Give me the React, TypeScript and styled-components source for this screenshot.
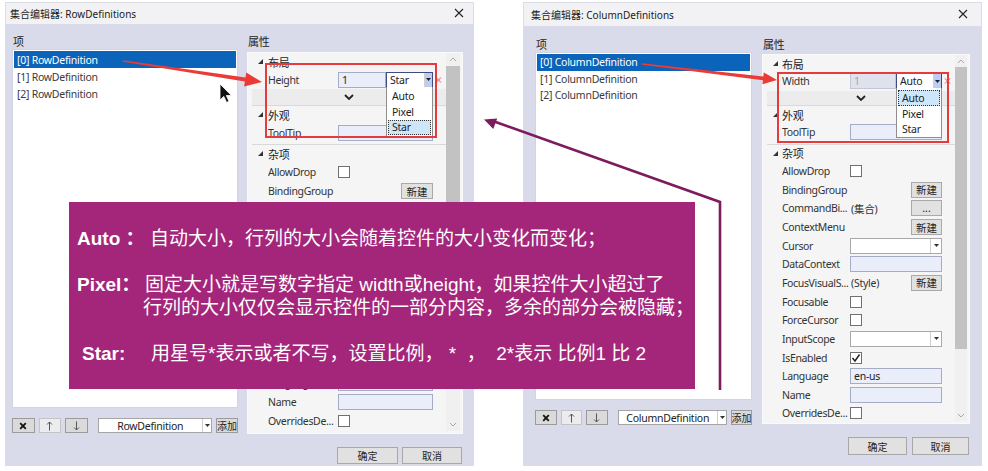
import React from 'react';
import styled, { createGlobalStyle } from 'styled-components';

const GlobalStyle = createGlobalStyle`
  html, body {
    margin: 0;
    padding: 0;
    background: #fff;
  }
  body {
    font-family: "Noto Sans", "Noto Sans CJK SC", sans-serif;
  }
  * {
    box-sizing: border-box;
  }
`;

type GridMetrics = {
  triX: number;
  labelX: number;
  valueX: number;
  valueW: number;
  numW: number;
  rowH: number;
  expandH: number;
  scrollW: number;
  arrowH: number;
  thumbH: number;
  btnW: number;
};

type EditorMetrics = {
  title: string;
  item: string;
  sizeLabel: string;
  selected: string;
  numDisabled: boolean;
  width: number;
  height: number;
  titleH: number;
  titleX: number;
  closeR: number;
  padT: number;
  padL: number;
  padR: number;
  listW: number;
  colGap: number;
  capH: number;
  listH: number;
  itemH: number;
  tbBtnW: number;
  addW: number;
  panelTop: number;
  panelH: number;
  footGap: number;
  footH: number;
  okW: number;
  cancelW: number;
  footBtnGap: number;
  grid: GridMetrics;
};

const rowEditor: EditorMetrics = {
  title: '集合编辑器: RowDefinitions',
  item: 'RowDefinition',
  sizeLabel: 'Height',
  selected: 'Star',
  numDisabled: false,
  width: 467,
  height: 462,
  titleH: 21,
  titleX: 4,
  closeR: 9,
  padT: 9,
  padL: 6,
  padR: 10,
  listW: 226,
  colGap: 9,
  capH: 16,
  listH: 359,
  itemH: 17,
  tbBtnW: 22.5,
  addW: 22,
  panelTop: 3,
  panelH: 382,
  footGap: 13,
  footH: 17,
  okW: 61,
  cancelW: 60,
  footBtnGap: 4,
  grid: {
    triX: 10,
    labelX: 20,
    valueX: 90,
    valueW: 95,
    numW: 48,
    rowH: 19.2,
    expandH: 16,
    scrollW: 14,
    arrowH: 13,
    thumbH: 292,
    btnW: 32,
  },
};

const columnEditor: EditorMetrics = {
  title: '集合编辑器: ColumnDefinitions',
  item: 'ColumnDefinition',
  sizeLabel: 'Width',
  selected: 'Auto',
  numDisabled: true,
  width: 457,
  height: 462,
  titleH: 23,
  titleX: 7,
  closeR: 13,
  padT: 9,
  padL: 11,
  padR: 11,
  listW: 217,
  colGap: 10,
  capH: 17,
  listH: 348,
  itemH: 16.5,
  tbBtnW: 21.5,
  addW: 21,
  panelTop: 2,
  panelH: 370,
  footGap: 12,
  footH: 18,
  okW: 59,
  cancelW: 57,
  footBtnGap: 5,
  grid: {
    triX: 10,
    labelX: 19,
    valueX: 87,
    valueW: 92,
    numW: 46,
    rowH: 18.65,
    expandH: 14.5,
    scrollW: 12,
    arrowH: 12,
    thumbH: 282,
    btnW: 31,
  },
};

type Prop =
  | { kind: 'check'; name: string; checked?: boolean }
  | { kind: 'button'; name: string; text?: string; btn: string }
  | { kind: 'input'; name: string; value?: string }
  | { kind: 'combo'; name: string };

const miscProps: Prop[] = [
  { kind: 'check', name: 'AllowDrop' },
  { kind: 'button', name: 'BindingGroup', btn: '新建' },
  { kind: 'button', name: 'CommandBi...', text: '(集合)', btn: '...' },
  { kind: 'button', name: 'ContextMenu', btn: '新建' },
  { kind: 'combo', name: 'Cursor' },
  { kind: 'input', name: 'DataContext' },
  { kind: 'button', name: 'FocusVisualS...', text: '(Style)', btn: '新建' },
  { kind: 'check', name: 'Focusable' },
  { kind: 'check', name: 'ForceCursor' },
  { kind: 'combo', name: 'InputScope' },
  { kind: 'check', name: 'IsEnabled', checked: true },
  { kind: 'input', name: 'Language', value: 'en-us' },
  { kind: 'input', name: 'Name' },
  { kind: 'check', name: 'OverridesDe...' },
];

const Page = styled.div`
  position: relative;
  width: 988px;
  height: 471px;
  overflow: hidden;
  background: #fff;
  display: flex;
  align-items: flex-start;
  gap: 51px;
  padding: 3px 0 0 6px;
`;

const Window = styled.div<{ $w: number; $h: number }>`
  width: ${(p) => p.$w}px;
  height: ${(p) => p.$h}px;
  flex: none;
  display: flex;
  flex-direction: column;
  background: #d9dbea;
  box-shadow: 0 0 0 1px #dcdce4;
  font-size: 10.5px;
  letter-spacing: -0.25px;
  color: #333;
  white-space: nowrap;
`;

const TitleBar = styled.div<{ $h: number; $x: number; $r: number }>`
  height: ${(p) => p.$h}px;
  flex: none;
  display: flex;
  align-items: center;
  justify-content: space-between;
  padding: 0 ${(p) => p.$r}px 1px ${(p) => p.$x}px;
  background: #f2f2f4;
  font-size: 10px;
  letter-spacing: 0;
  color: #1b1b1b;
`;

const Body = styled.div<{ $cols: string; $gap: number; $pad: string }>`
  display: grid;
  grid-template-columns: ${(p) => p.$cols};
  column-gap: ${(p) => p.$gap}px;
  align-items: start;
  padding: ${(p) => p.$pad};
`;

const Column = styled.div`
  display: flex;
  flex-direction: column;
`;

const Caption = styled.div<{ $h: number }>`
  height: ${(p) => p.$h}px;
  display: flex;
  align-items: center;
  padding-left: 1px;
  font-size: 11px;
  color: #222;
`;

const ItemList = styled.div<{ $h: number }>`
  height: ${(p) => p.$h}px;
  padding: 1px;
  background: #fff;
  border: 1px solid #d2d4e2;
`;

const Item = styled.div<{ $h: number; $selected?: boolean }>`
  height: ${(p) => p.$h}px;
  display: flex;
  align-items: center;
  padding-left: 3px;
  font-size: 10.5px;
  color: ${(p) => (p.$selected ? '#fff' : '#3a3a3a')};
  background: ${(p) => (p.$selected ? '#0b63ba' : 'transparent')};
`;

const Toolbar = styled.div`
  height: 15px;
  margin-top: 10px;
  display: flex;
  gap: 4px;
`;

const ToolButton = styled.div<{ $w: number; $light?: boolean }>`
  width: ${(p) => p.$w}px;
  flex: none;
  display: flex;
  align-items: center;
  justify-content: center;
  overflow: hidden;
  background: ${(p) => (p.$light ? '#ececee' : '#dadada')};
  border: 1px solid ${(p) => (p.$light ? '#c4c4c8' : '#9b9b9b')};
  font-size: 10px;
  letter-spacing: 0;
  color: #222;
`;

const TypeCombo = styled.div`
  flex: 1;
  margin-left: 6px;
  display: flex;
  background: #fff;
  border: 1px solid #a6a6a6;
`;

const TypeComboText = styled.div`
  flex: 1;
  display: flex;
  align-items: center;
  justify-content: center;
  font-size: 10.5px;
  color: #222;
`;

const ComboArrow = styled.div<{ $w: number; $bg?: string }>`
  width: ${(p) => p.$w}px;
  flex: none;
  display: flex;
  align-items: center;
  justify-content: center;
  border-left: 1px solid #cfcfcf;
  background: ${(p) => p.$bg ?? 'transparent'};
`;

const Panel = styled.div<{ $h: number; $mt: number }>`
  height: ${(p) => p.$h}px;
  margin-top: ${(p) => p.$mt}px;
  display: flex;
  background: #f5f5f5;
  border: 1px solid #fafafa;
`;

const PanelBody = styled.div`
  flex: 1;
  min-width: 0;
  display: flex;
  flex-direction: column;
  overflow: hidden;
`;

const GroupHeader = styled.div<{ $x: number; $gap: number }>`
  height: 17px;
  flex: none;
  display: flex;
  align-items: center;
  gap: ${(p) => p.$gap}px;
  padding-left: ${(p) => p.$x}px;
  font-size: 11px;
  color: #222;
`;

const Divider = styled.div<{ $mt?: number }>`
  height: 1px;
  flex: none;
  margin: ${(p) => p.$mt ?? 0}px 0 0 4px;
  background: #d9d9d9;
`;

const PropRow = styled.div<{ $h: number; $x: number }>`
  height: ${(p) => p.$h}px;
  flex: none;
  display: flex;
  align-items: center;
  padding-left: ${(p) => p.$x}px;
`;

const PropLabel = styled.div<{ $w: number }>`
  width: ${(p) => p.$w}px;
  flex: none;
  overflow: hidden;
  font-size: 10.5px;
  letter-spacing: -0.35px;
  color: #333;
`;

const PropValue = styled.div<{ $w: number }>`
  width: ${(p) => p.$w}px;
  flex: none;
  display: flex;
  align-items: center;
  position: relative;
`;

const ExpandRow = styled.div<{ $h: number; $x: number }>`
  height: ${(p) => p.$h}px;
  flex: none;
  display: flex;
  align-items: center;
  margin-left: 4px;
  padding-left: ${(p) => p.$x}px;
  background: #ececec;
`;

const TextBox = styled.div<{ $w?: number; $disabled?: boolean }>`
  width: ${(p) => (p.$w ? `${p.$w}px` : '100%')};
  height: 16px;
  flex: none;
  display: flex;
  align-items: center;
  padding-left: 3px;
  background: ${(p) => (p.$disabled ? '#dfe2ec' : '#eaeefa')};
  border: 1px solid ${(p) => (p.$disabled ? '#c2c7d6' : '#a5acc6')};
  font-size: 10.5px;
  color: ${(p) => (p.$disabled ? '#a6a6a6' : '#222')};
`;

const UnitCombo = styled.div`
  flex: 1;
  height: 16px;
  display: flex;
  position: relative;
  background: #fff;
  border: 1px solid #3f4b7e;
`;

const UnitText = styled.div`
  flex: 1;
  display: flex;
  align-items: center;
  padding-left: 3px;
  font-size: 10.5px;
  color: #222;
`;

const DropList = styled.div`
  position: absolute;
  top: 100%;
  left: -1px;
  right: -1px;
  height: 50px;
  padding: 2px 1px 0;
  background: #fff;
  border: 1px solid #8d8d8d;
  border-top: none;
  z-index: 2;
`;

const DropItem = styled.div<{ $selected?: boolean }>`
  height: 15.5px;
  display: flex;
  align-items: center;
  padding-left: 4px;
  font-size: 10.5px;
  color: #222;
  background: ${(p) => (p.$selected ? '#cde6fa' : 'transparent')};
  outline: ${(p) => (p.$selected ? '1px dotted #333' : 'none')};
  outline-offset: -1px;
`;

const ClearMark = styled.div`
  position: absolute;
  left: calc(100% + 2px);
  top: 50%;
  transform: translateY(-50%);
  display: flex;
`;

const CheckBox = styled.div`
  width: 12px;
  height: 12px;
  flex: none;
  display: flex;
  align-items: center;
  justify-content: center;
  background: #fff;
  border: 1px solid #707070;
`;

const SmallButton = styled.div<{ $w: number }>`
  width: ${(p) => p.$w}px;
  height: 16px;
  margin-left: auto;
  flex: none;
  display: flex;
  align-items: center;
  justify-content: center;
  background: #e1e1e1;
  border: 1px solid #a9a9a9;
  font-size: 10.5px;
  letter-spacing: 0;
  color: #222;
`;

const ValueNote = styled.span`
  padding-left: 1px;
  font-size: 10.5px;
  color: #333;
`;

const ValueCombo = styled.div`
  width: 100%;
  height: 16px;
  display: flex;
  background: #fff;
  border: 1px solid #a9a9a9;
`;

const Scrollbar = styled.div<{ $w: number }>`
  width: ${(p) => p.$w}px;
  flex: none;
  margin: 0 2px 2px 0;
  display: flex;
  flex-direction: column;
  background: #f0f0f0;
`;

const ScrollArrow = styled.div<{ $h: number }>`
  height: ${(p) => p.$h}px;
  flex: none;
  display: flex;
  align-items: center;
  justify-content: center;
`;

const ScrollThumb = styled.div<{ $h: number }>`
  height: ${(p) => p.$h}px;
  flex: none;
  background: #c2c2c2;
`;

const ScrollSpace = styled.div`
  flex: 1;
`;

const Footer = styled.div<{ $mt: number; $pr: number; $gap: number }>`
  display: flex;
  justify-content: flex-end;
  gap: ${(p) => p.$gap}px;
  margin-top: ${(p) => p.$mt}px;
  padding-right: ${(p) => p.$pr}px;
`;

const DialogButton = styled.div<{ $w: number; $h: number }>`
  width: ${(p) => p.$w}px;
  height: ${(p) => p.$h}px;
  display: flex;
  align-items: center;
  justify-content: center;
  background: #e1e1e1;
  border: 1px solid #a8a8a8;
  font-size: 10px;
  letter-spacing: 0;
  color: #1e1e1e;
`;

/* annotations laid over the screenshot */

const Overlay = styled.svg`
  position: absolute;
  left: 0;
  top: 0;
  pointer-events: none;
  z-index: 5;
`;

const RedFrame = styled.div<{ $x: number; $y: number; $w: number; $h: number }>`
  position: absolute;
  left: ${(p) => p.$x}px;
  top: ${(p) => p.$y}px;
  width: ${(p) => p.$w}px;
  height: ${(p) => p.$h}px;
  border: 2px solid #e63b3d;
  z-index: 4;
`;

const Note = styled.div`
  position: absolute;
  left: 69px;
  top: 202px;
  width: 626px;
  height: 187px;
  padding: 25px 0 0 8px;
  background: #a4267a;
  color: #fff;
  font-family: "Liberation Sans", "Noto Sans CJK SC", sans-serif;
  font-size: 19px;
  line-height: 23px;
  z-index: 4;
`;

const NoteRow = styled.div`
  display: flex;
  white-space: pre;

  & + & {
    margin-top: 23px;
  }
`;

const NoteKey = styled.span<{ $w: number; $indent?: number }>`
  width: ${(p) => p.$w}px;
  margin-left: ${(p) => p.$indent ?? 0}px;
  flex: none;
  font-weight: bold;
`;

const NoteLines = styled.div`
  flex: none;
  display: flex;
  flex-direction: column;
`;

const NoteWrap = styled.span`
  margin-left: -2px;
`;

const Triangle = () => (
  <svg width="5" height="5" viewBox="0 0 5 5">
    <polygon points="5,0 5,5 0,5" fill="#333" />
  </svg>
);

const DownTick = ({ color = '#333' }: { color?: string }) => (
  <svg width="5" height="3" viewBox="0 0 5 3">
    <polygon points="0,0 5,0 2.5,3" fill={color} />
  </svg>
);

const CloseIcon = () => (
  <svg width="10" height="10" viewBox="0 0 10 10">
    <path d="M1 1 L9 9 M9 1 L1 9" stroke="#222" strokeWidth="1.1" />
  </svg>
);

const ClearIcon = () => (
  <svg width="7" height="7" viewBox="0 0 7 7">
    <path d="M1 1 L6 6 M6 1 L1 6" stroke="#e8504e" strokeWidth="1" />
  </svg>
);

const Chevron = () => (
  <svg width="10" height="6" viewBox="0 0 10 6">
    <polyline points="1,1 5,5 9,1" fill="none" stroke="#222" strokeWidth="1.8" />
  </svg>
);

const Tick = () => (
  <svg width="10" height="10" viewBox="0 0 10 10">
    <polyline points="1.5,5 4,8 8.5,1.5" fill="none" stroke="#222" strokeWidth="1.5" />
  </svg>
);

const ScrollCaret = ({ up }: { up?: boolean }) => (
  <svg width="8" height="5" viewBox="0 0 8 5">
    <polyline
      points={up ? '1,4 4,1 7,4' : '1,1 4,4 7,1'}
      fill="none"
      stroke="#a8a8a8"
      strokeWidth="1"
    />
  </svg>
);

const DeleteIcon = () => (
  <svg width="8" height="8" viewBox="0 0 8 8">
    <path d="M1.2 1.2 L6.8 6.8 M6.8 1.2 L1.2 6.8" stroke="#111" strokeWidth="1.8" />
  </svg>
);

const ArrowIcon = ({ up }: { up?: boolean }) => (
  <svg width="7" height="10" viewBox="0 0 7 10">
    <path
      d={up ? 'M3.5 1 V9.5 M1 3.5 L3.5 1 L6 3.5' : 'M3.5 0.5 V9 M1 6.5 L3.5 9 L6 6.5'}
      fill="none"
      stroke="#555"
      strokeWidth="1"
    />
  </svg>
);

const PropEditor: React.FC<{ p: Prop; g: GridMetrics }> = ({ p, g }) => {
  switch (p.kind) {
    case 'check':
      return <CheckBox>{p.checked && <Tick />}</CheckBox>;
    case 'button':
      return (
        <>
          {p.text && <ValueNote>{p.text}</ValueNote>}
          <SmallButton $w={g.btnW}>{p.btn}</SmallButton>
        </>
      );
    case 'input':
      return <TextBox>{p.value}</TextBox>;
    case 'combo':
      return (
        <ValueCombo>
          <ScrollSpace />
          <ComboArrow $w={11}>
            <DownTick />
          </ComboArrow>
        </ValueCombo>
      );
  }
};

const PropertyGrid: React.FC<{ m: EditorMetrics }> = ({ m }) => {
  const g = m.grid;
  const labelW = g.valueX - g.labelX;
  const headerGap = g.labelX - g.triX - 5;
  return (
    <Panel $h={m.panelH} $mt={m.panelTop}>
      <PanelBody>
        <GroupHeader $x={g.triX} $gap={headerGap}>
          <Triangle />
          布局
        </GroupHeader>
        <PropRow $h={g.rowH} $x={g.labelX}>
          <PropLabel $w={labelW}>{m.sizeLabel}</PropLabel>
          <PropValue $w={g.valueW}>
            <TextBox $w={g.numW} $disabled={m.numDisabled}>
              1
            </TextBox>
            <UnitCombo>
              <UnitText>{m.selected}</UnitText>
              <ComboArrow $w={8} $bg="#bccdf3">
                <DownTick color="#222" />
              </ComboArrow>
              <DropList>
                {['Auto', 'Pixel', 'Star'].map((opt) => (
                  <DropItem key={opt} $selected={opt === m.selected}>
                    {opt}
                  </DropItem>
                ))}
              </DropList>
            </UnitCombo>
            <ClearMark>
              <ClearIcon />
            </ClearMark>
          </PropValue>
        </PropRow>
        <ExpandRow $h={g.expandH} $x={g.valueX + 2}>
          <Chevron />
        </ExpandRow>
        <Divider />
        <GroupHeader $x={g.triX} $gap={headerGap}>
          <Triangle />
          外观
        </GroupHeader>
        <PropRow $h={g.rowH} $x={g.labelX}>
          <PropLabel $w={labelW}>ToolTip</PropLabel>
          <PropValue $w={g.valueW}>
            <TextBox />
          </PropValue>
        </PropRow>
        <Divider $mt={2} />
        <GroupHeader $x={g.triX} $gap={headerGap}>
          <Triangle />
          杂项
        </GroupHeader>
        {miscProps.map((p) => (
          <PropRow key={p.name} $h={g.rowH} $x={g.labelX}>
            <PropLabel $w={labelW}>{p.name}</PropLabel>
            <PropValue $w={g.valueW}>
              <PropEditor p={p} g={g} />
            </PropValue>
          </PropRow>
        ))}
      </PanelBody>
      <Scrollbar $w={g.scrollW}>
        <ScrollArrow $h={g.arrowH}>
          <ScrollCaret up />
        </ScrollArrow>
        <ScrollThumb $h={g.thumbH} />
        <ScrollSpace />
        <ScrollArrow $h={g.arrowH}>
          <ScrollCaret />
        </ScrollArrow>
      </Scrollbar>
    </Panel>
  );
};

const CollectionEditor: React.FC<{ m: EditorMetrics }> = ({ m }) => {
  const propW = m.width - m.padL - m.padR - m.listW - m.colGap;
  return (
    <Window $w={m.width} $h={m.height}>
      <TitleBar $h={m.titleH} $x={m.titleX} $r={m.closeR}>
        <span>{m.title}</span>
        <CloseIcon />
      </TitleBar>
      <Body
        $cols={`${m.listW}px ${propW}px`}
        $gap={m.colGap}
        $pad={`${m.padT}px ${m.padR}px 0 ${m.padL}px`}
      >
        <Column>
          <Caption $h={m.capH}>项</Caption>
          <ItemList $h={m.listH}>
            {[0, 1, 2].map((i) => (
              <Item key={i} $h={m.itemH} $selected={i === 0}>
                [{i}] {m.item}
              </Item>
            ))}
          </ItemList>
          <Toolbar>
            <ToolButton $w={m.tbBtnW}>
              <DeleteIcon />
            </ToolButton>
            <ToolButton $w={m.tbBtnW} $light>
              <ArrowIcon up />
            </ToolButton>
            <ToolButton $w={m.tbBtnW}>
              <ArrowIcon />
            </ToolButton>
            <TypeCombo>
              <TypeComboText>{m.item}</TypeComboText>
              <ComboArrow $w={9}>
                <DownTick />
              </ComboArrow>
            </TypeCombo>
            <ToolButton $w={m.addW}>添加</ToolButton>
          </Toolbar>
        </Column>
        <Column>
          <Caption $h={m.capH}>属性</Caption>
          <PropertyGrid m={m} />
        </Column>
      </Body>
      <Footer $mt={m.footGap} $pr={m.padR + 1} $gap={m.footBtnGap}>
        <DialogButton $w={m.okW} $h={m.footH}>
          确定
        </DialogButton>
        <DialogButton $w={m.cancelW} $h={m.footH}>
          取消
        </DialogButton>
      </Footer>
    </Window>
  );
};

// tapered arrow: thin at the tail, wider near the head
const arrowPoints = (
  x1: number,
  y1: number,
  x2: number,
  y2: number,
  w0: number,
  w1: number,
  headL: number,
  headW: number,
) => {
  const len = Math.hypot(x2 - x1, y2 - y1);
  const ux = (x2 - x1) / len;
  const uy = (y2 - y1) / len;
  const nx = -uy;
  const ny = ux;
  const bx = x2 - ux * headL;
  const by = y2 - uy * headL;
  const pts = [
    [x1 + nx * w0, y1 + ny * w0],
    [bx + nx * w1, by + ny * w1],
    [bx + nx * headW, by + ny * headW],
    [x2, y2],
    [bx - nx * headW, by - ny * headW],
    [bx - nx * w1, by - ny * w1],
    [x1 - nx * w0, y1 - ny * w0],
  ];
  return pts.map((pt) => pt.map((v) => v.toFixed(1)).join(',')).join(' ');
};

const Annotations = () => (
  <>
    <RedFrame $x={265} $y={63} $w={172} $h={75} />
    <RedFrame $x={777} $y={72} $w={172} $h={71} />
    <Note>
      <NoteRow>
        <NoteKey $w={73}>Auto ：</NoteKey>
        <span>自动大小，行列的大小会随着控件的大小变化而变化；</span>
      </NoteRow>
      <NoteRow>
        <NoteKey $w={68}>Pixel：</NoteKey>
        <NoteLines>
          <span>固定大小就是写数字指定 width或height，如果控件大小超过了</span>
          <NoteWrap>行列的大小仅仅会显示控件的一部分内容，多余的部分会被隐藏；</NoteWrap>
        </NoteLines>
      </NoteRow>
      <NoteRow>
        <NoteKey $w={69} $indent={5}>
          Star:
        </NoteKey>
        <span>用星号*表示或者不写，设置比例， *  ，  2*表示 比例1 比 2</span>
      </NoteRow>
    </Note>
    <Overlay width="988" height="471" viewBox="0 0 988 471">
      <polygon points={arrowPoints(123, 61, 262, 82, 0.8, 2, 17, 7)} fill="#ea3b36" />
      <polygon points={arrowPoints(642, 64, 777, 80, 0.8, 2, 14, 6)} fill="#ea3b36" />
      <polyline
        points="720,390 720,202 490,120"
        fill="none"
        stroke="#7c1b5d"
        strokeWidth="2.6"
      />
      <polygon points={arrowPoints(500, 125.5, 484, 119.5, 0, 0, 12, 5.5)} fill="#7c1b5d" />
      <path
        d="M220 84 L220 100 L223.8 96.4 L226.6 102.4 L229 101.3 L226.3 95.5 L231.4 95.5 Z"
        fill="#111"
        stroke="#fff"
        strokeWidth="0.8"
      />
    </Overlay>
  </>
);

const App: React.FC = () => (
  <>
    <GlobalStyle />
    <Page>
      <CollectionEditor m={rowEditor} />
      <CollectionEditor m={columnEditor} />
      <Annotations />
    </Page>
  </>
);

export default App;
